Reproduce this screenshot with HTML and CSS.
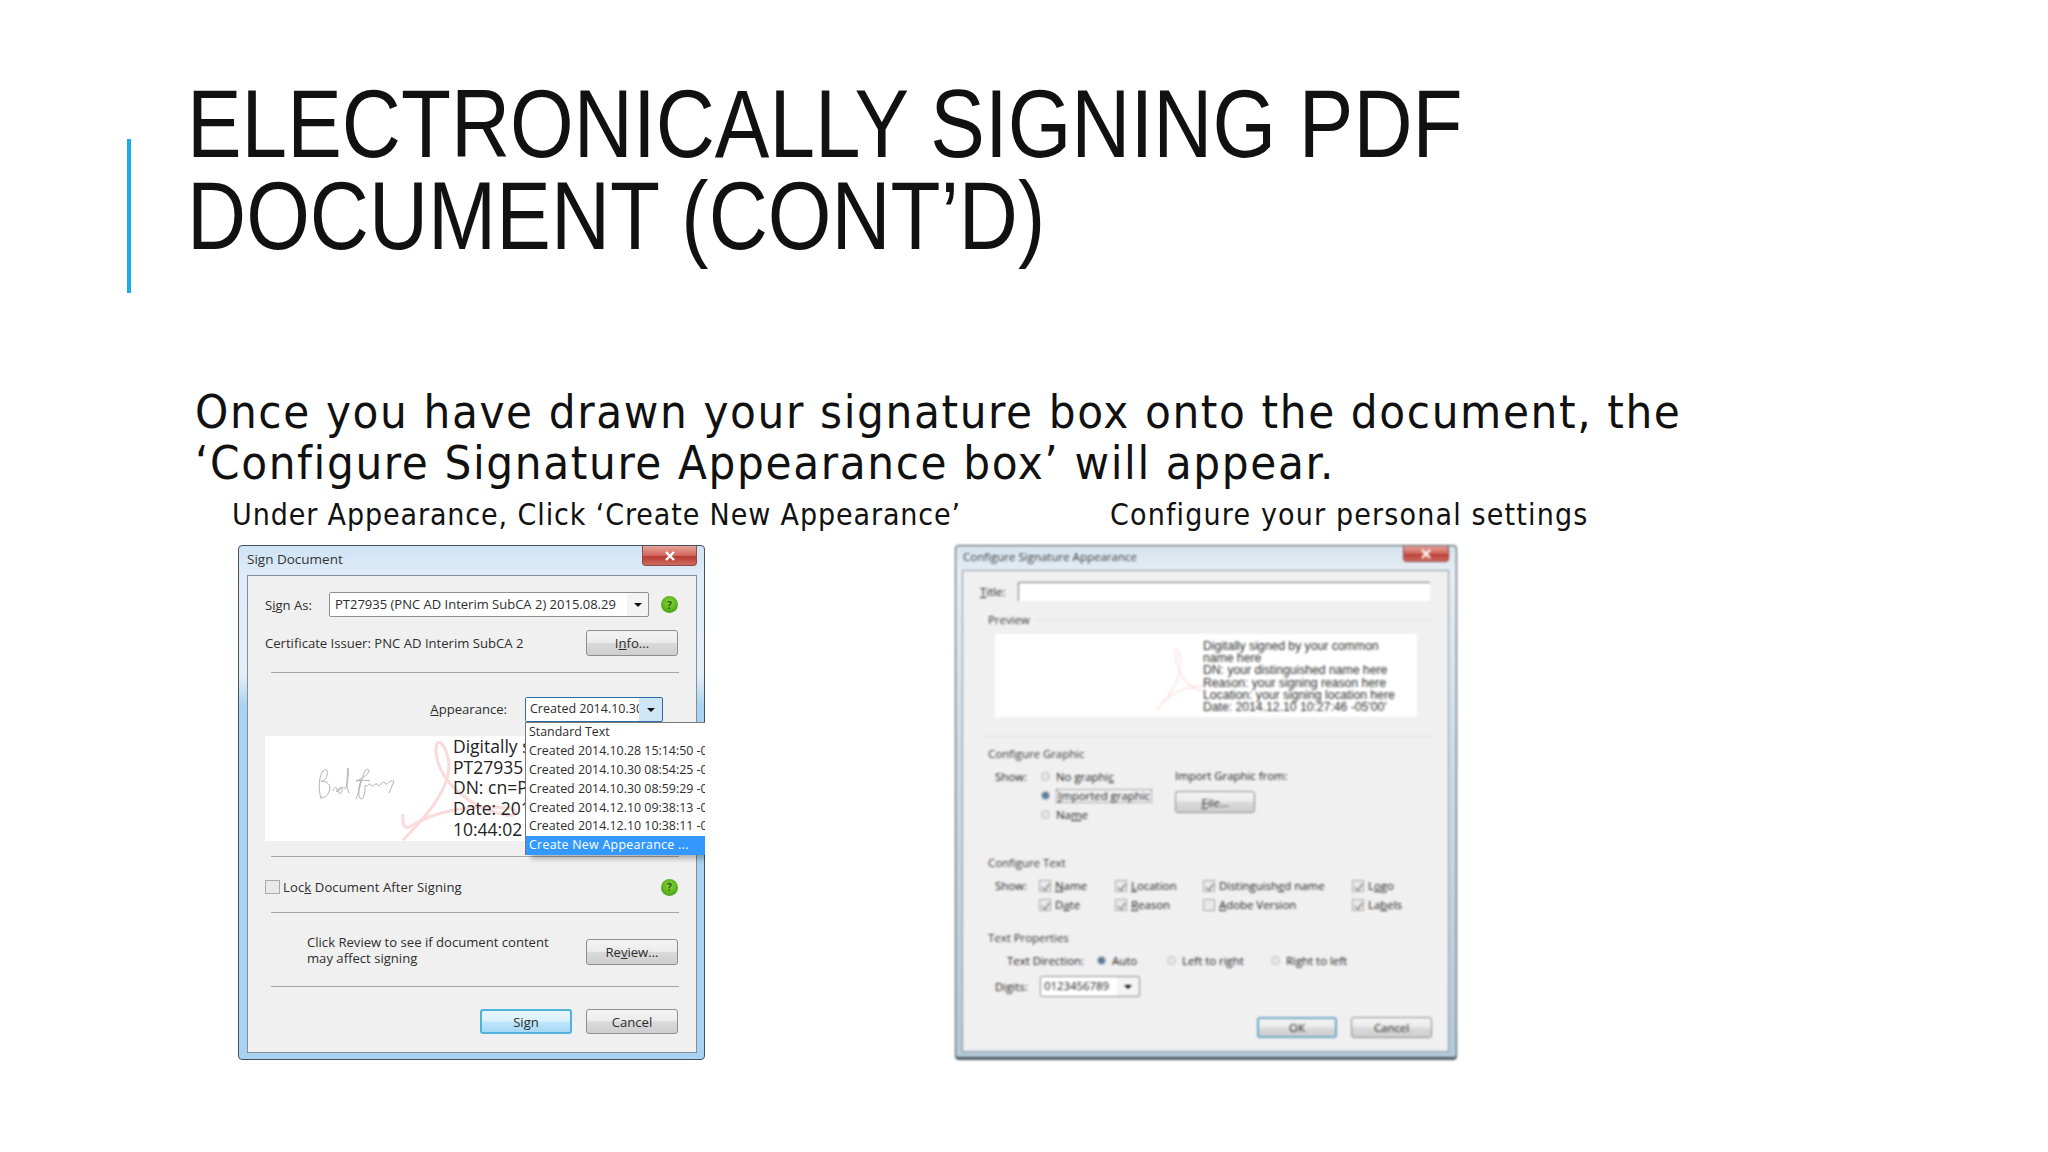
FILE: index.html
```html
<!DOCTYPE html>
<html lang="en">
<head>
<meta charset="utf-8">
<title>Electronically signing PDF document</title>
<link rel="stylesheet" href="styles.css">
</head>
<body>
<main class="slide">
  <header class="head">
    <div class="accent"></div>
    <h1 class="title">ELECTRONICALLY SIGNING PDF<br>DOCUMENT (CONT’D)</h1>
  </header>
  <p class="lead">Once you have drawn your signature box onto the document, the<br>‘Configure Signature Appearance box’ will appear.</p>
  <div class="captions">
    <p class="caption caption-a">Under Appearance, Click ‘Create New Appearance’</p>
    <p class="caption caption-b">Configure your personal settings</p>
  </div>
  <div class="shots">

    <section class="dlg dlg-sign">
      <div class="bar">
        <span class="bar-title">Sign Document</span>
        <span class="close"><svg viewBox="0 0 12 10" class="close-x"><path d="M2 1l8 8M10 1l-8 8"/></svg></span>
      </div>
      <div class="pane">
        <div class="row r-signas">
          <span class="lbl lbl-signas">S<u>i</u>gn As:</span>
          <span class="combo combo-signas"><span class="combo-text">PT27935 (PNC AD Interim SubCA 2) 2015.08.29</span><i class="arrow"></i></span>
          <span class="help">?</span>
        </div>
        <div class="row r-issuer">
          <span class="lbl">Certificate Issuer: PNC AD Interim SubCA 2</span>
          <button class="btn btn-wide">I<u>n</u>fo...</button>
        </div>
        <div class="sep sep-1"></div>
        <div class="row r-appear">
          <span class="lbl"><u>A</u>ppearance:</span>
          <span class="combo combo-focus">
            <span class="combo-text">Created 2014.10.30 08:59:29</span><i class="arrow"></i>
            <ul class="menu">
              <li>Standard Text</li>
              <li>Created 2014.10.28 15:14:50 -05'00'</li>
              <li>Created 2014.10.30 08:54:25 -05'00'</li>
              <li>Created 2014.10.30 08:59:29 -05'00'</li>
              <li>Created 2014.12.10 09:38:13 -05'00'</li>
              <li>Created 2014.12.10 10:38:11 -05'00'</li>
              <li class="menu-on">Create New Appearance ...</li>
            </ul>
          </span>
        </div>
        <div class="preview preview-sign">
          <svg class="logo logo-sign" viewBox="0 0 260 110"><path d="M138 104C162 80 192 46 182 18 177 2 168 2 172 22 176 46 205 72 240 79 254 81 254 72 240 72 205 68 168 76 146 90 140 94 137 90 138 78"/></svg>
          <svg class="scribble" viewBox="0 0 80 34"><path d="M3 33C0 22 1 10 5 5 9 1 11 6 8 12 6 15 4 16 3 15 9 15 14 19 11 26 9 31 5 33 2 30M15 25C17 20 19 20 19 26 21 21 24 20 24 25 22 30 19 27 22 22 26 20 27 25 28 21 30 14 31 7 30 2 29 12 28 22 31 27M38 33C42 24 43 12 47 5 50 1 52 4 50 7 46 12 41 14 38 15 44 14 48 14 52 15M43 14C40 22 40 32 43 33 46 34 47 26 47 20M47 19C50 23 50 15 53 19 55 23 57 15 60 19 62 23 64 13 67 17 69 21 71 13 76 15L71 27"/></svg>
          <div class="sig-text">Digitally signed by Brad<br>PT27935<br>DN: cn=PT27935<br>Date: 2014.10.30<br>10:44:02 -05'00'</div>
        </div>
        <div class="sep sep-2"></div>
        <div class="row r-lock">
          <label class="check-wrap"><i class="box box-lg"></i><span class="lbl lock-lbl">Loc<u>k</u> Document After Signing</span></label>
          <span class="help">?</span>
        </div>
        <div class="sep sep-3"></div>
        <div class="row r-review">
          <span class="lbl review-note">Click Review to see if document content<br>may affect signing</span>
          <button class="btn btn-wide">Re<u>v</u>iew...</button>
        </div>
        <div class="sep sep-4"></div>
        <div class="row r-actions">
          <button class="btn btn-wide btn-default">Sign</button>
          <button class="btn btn-wide">Cancel</button>
        </div>
      </div>
    </section>

    <section class="dlg dlg-config">
      <div class="bar bar-config">
        <span class="bar-title">Configure Signature Appearance</span>
        <span class="close close-config"><svg viewBox="0 0 12 10" class="close-x"><path d="M2 1l8 8M10 1l-8 8"/></svg></span>
      </div>
      <div class="pane pane-config">
        <div class="row c-title">
          <span class="c-title-lbl"><u>T</u>itle:</span>
          <span class="input"></span>
        </div>
        <div class="group-head c-preview-head"><span>Preview</span><i class="fade-rule"></i></div>
        <div class="preview preview-config">
          <svg class="logo logo-config" viewBox="0 0 60 80"><path d="M2 78C18 62 34 38 30 14 28 2 24 2 25 16 27 34 38 52 58 56"/><path d="M58 50C40 48 20 58 8 70"/></svg>
          <div class="sample">Digitally signed by your common<br>name here<br>DN: your distinguished name here<br>Reason: your signing reason here<br>Location: your signing location here<br>Date: 2014.12.10 10:27:46 -05'00'</div>
        </div>
        <div class="fade-rule c-rule"></div>
        <div class="group-head c-graphic-head"><span>Configure Graphic</span></div>
        <div class="graphic-grid">
          <span class="show">Show:</span>
          <div class="radios">
            <label class="opt"><i class="radio"></i><span>No graphi<u>c</u></span></label>
            <label class="opt"><i class="radio radio-on"></i><span class="focus"><u>I</u>mported graphic</span></label>
            <label class="opt"><i class="radio"></i><span>Na<u>m</u>e</span></label>
          </div>
          <div class="import">
            <span>Import Graphic from:</span>
            <button class="btn btn-file"><u>F</u>ile...</button>
          </div>
        </div>
        <div class="group-head c-text-head"><span>Configure Text</span></div>
        <div class="checks">
          <span class="show">Show:</span>
          <label class="opt"><i class="box box-on"></i><span><u>N</u>ame</span></label>
          <label class="opt"><i class="box box-on"></i><span><u>L</u>ocation</span></label>
          <label class="opt"><i class="box box-on"></i><span>Distinguish<u>e</u>d name</span></label>
          <label class="opt"><i class="box box-on"></i><span>L<u>o</u>go</span></label>
          <span></span>
          <label class="opt"><i class="box box-on"></i><span>D<u>a</u>te</span></label>
          <label class="opt"><i class="box box-on"></i><span><u>R</u>eason</span></label>
          <label class="opt"><i class="box"></i><span><u>A</u>dobe Version</span></label>
          <label class="opt"><i class="box box-on"></i><span>La<u>b</u>els</span></label>
        </div>
        <div class="group-head c-props-head"><span>Text Properties</span></div>
        <div class="direction">
          <span class="dir-lbl">Text Direction:</span>
          <label class="opt dir-auto"><i class="radio radio-on"></i><span>Auto</span></label>
          <label class="opt dir-ltr"><i class="radio"></i><span>Left to right</span></label>
          <label class="opt"><i class="radio"></i><span>Right to left</span></label>
        </div>
        <div class="digits">
          <span class="digits-lbl">Digits:</span>
          <span class="combo combo-digits"><span class="combo-text">0123456789</span><i class="arrow"></i></span>
        </div>
        <div class="row c-actions">
          <button class="btn btn-ok">OK</button>
          <button class="btn btn-ccl">Cancel</button>
        </div>
      </div>
    </section>

  </div>
</main>
</body>
</html>
```
FILE: styles.css
```css
* { box-sizing: border-box; }
html, body { margin: 0; padding: 0; background: #fff; }
.slide { width: 2048px; height: 1152px; overflow: hidden; background: #fff; color: #111; }

.head { display: flex; align-items: flex-start; padding: 78px 0 0 127px; }
.accent { width: 3.5px; height: 154px; margin-top: 61px; background: #1cade4; flex: none; }
.title { margin: 0 0 0 56.5px; font: 400 96px/92px "Liberation Sans", sans-serif; color: #111; white-space: nowrap; transform: scaleX(.853); transform-origin: left top; }

.lead { margin: 94px 0 0 195px; font: 400 47px/50.5px "DejaVu Sans Condensed", "DejaVu Sans", sans-serif; letter-spacing: 1.62px; color: #111; white-space: nowrap; }

.captions { display: flex; margin-top: 9px; padding-left: 232px; }
.caption { margin: 0; font: 400 30px/36px "DejaVu Sans Condensed", "DejaVu Sans", sans-serif; color: #111; white-space: nowrap; }
.caption-a { width: 878px; letter-spacing: .89px; }
.caption-b { letter-spacing: 1.16px; }

.shots { display: flex; gap: 250px; margin-top: 12px; padding-left: 238px; }

/* dialogs */
.dlg { display: flex; flex-direction: column; height: 515px; border: 1px solid #46535e; border-radius: 4px; font-family: "Open Sans", sans-serif; color: #2d2d2d; background: linear-gradient(180deg, #cfe3f5 0, #dfecf8 30px, #e4eef7 130px, #a9d2f0 160px, #a9d2f0 100%); }
.dlg-sign { width: 467px; padding: 0 7px 6px 8px; font-size: 13.1px; }
.dlg-config { width: 502px; padding: 0 7px 5px 6px; font-size: 11.4px; color: #1f1f1f; filter: blur(0.85px); background: linear-gradient(180deg, #d5e3ee 0, #e6edf3 25px, #cfdce6 200px, #b4c8d7 100%); border-bottom: 3px solid #4f5a63; }

.bar { display: flex; justify-content: space-between; align-items: flex-start; height: 29px; flex: none; }
.bar-config { height: 24px; }
.bar-title { padding-top: 4px; line-height: 18px; font-size: 13.5px; color: #333; white-space: nowrap; }
.bar-config .bar-title { padding: 2px 0 0 1px; font-size: 11.5px; color: #3a3a3a; }
.close { display: flex; align-items: center; justify-content: center; width: 55px; height: 20px; border: 1px solid #8c4a48; border-top: 0; border-radius: 0 0 4px 4px; background: linear-gradient(180deg, #e8a49c 0, #d2665c 50%, #b73c33 55%, #cf6a60 100%); }
.close-config { width: 46px; height: 16px; }
.close-x { width: 12px; height: 10px; }
.close-x path { fill: none; stroke: #fff; stroke-width: 2.4; }

.pane { display: flex; flex-direction: column; flex: 1; padding: 0 18px 0 17px; background: #f0f0f0; border: 1px solid #7e8f9e; }
.row { display: flex; align-items: center; }
.lbl { white-space: nowrap; }
.lock-lbl { letter-spacing: .1px; }
.sep { height: 1px; margin: 0 -1px 0 6px; background: #a6a6a6; flex: none; }

.r-signas { height: 25px; margin-top: 16px; }
.lbl-signas { width: 64px; }
.combo { position: relative; display: flex; align-items: center; height: 25px; background: #f4f4f4; border: 1px solid #8f8f8f; border-radius: 2px; }
.combo-text { flex: 1; min-width: 0; overflow: hidden; white-space: nowrap; background: #fff; align-self: stretch; display: flex; align-items: center; padding: 0 0 2px 5px; }
.combo-signas { width: 320px; }
.combo-signas .combo-text { flex: none; width: 297px; font-size: 13px; }
.arrow { flex: none; width: 0; height: 0; margin: 0 auto; border-style: solid; border-width: 4px 4px 0; border-color: #111 transparent transparent; }
.help { display: flex; align-items: center; justify-content: center; width: 17px; height: 17px; margin-left: auto; border-radius: 50%; background: radial-gradient(circle at 50% 40%, #8fd63c 0, #56b01a 60%, #2f7f10 100%); font-size: 10px; font-weight: 700; color: #1d5a0a; }

.r-issuer { height: 26px; margin-top: 13px; justify-content: space-between; }
.btn { display: block; margin: 0; padding: 0; font: inherit; color: #2d2d2d; border: 1px solid #8e8e8e; border-radius: 3px; background: linear-gradient(180deg, #f4f4f4 0, #ebebeb 48%, #d9d9d9 52%, #cfcfcf 100%); }
.btn-wide { width: 92px; height: 100%; }
.btn-default { border: 2px solid #4fb3dc; background: linear-gradient(180deg, #eaf6fd 0, #d9f0fc 48%, #bee6fd 52%, #a7d9f5 100%); }

.sep-1 { margin-top: 16px; }
.r-appear { height: 25px; margin-top: 24px; justify-content: flex-end; padding-right: 15px; gap: 18px; }
.r-appear > .lbl { padding-bottom: 1px; }
.combo-focus { width: 138px; border: 1px solid #2a6aa8; background: #cfe6f7; }
.combo-focus .combo-text { flex: none; width: 113px; font-size: 12.5px; padding-left: 4px; }
.menu { position: absolute; z-index: 2; left: -1px; top: 24px; width: 180px; height: 133px; margin: 0; padding: 0; list-style: none; background: #fff; border: 1px solid #777; border-right: 0; box-shadow: 6px 4px 5px rgba(0,0,0,.25); clip-path: inset(0 0 -8px -2px); font-size: 12.4px; }
.menu li { height: 18.9px; padding-left: 3px; line-height: 18.9px; white-space: nowrap; overflow: hidden; }
.menu .menu-on { background: #3399ff; color: #fff; letter-spacing: .28px; }

.preview { position: relative; display: flex; background: #fff; flex: none; }
.preview-sign { width: 300px; height: 105px; margin-top: 14px; }
.logo { position: absolute; overflow: visible; }
.logo path { fill: none; stroke: #fadadb; stroke-width: 3; }
.logo-sign { left: 0; top: 0; width: 260px; height: 110px; }
.scribble { flex: none; width: 80px; height: 36px; margin: 29px 55px 0 53px; }
.scribble path { fill: none; stroke: #b3b3b3; stroke-width: 1; }
.sig-text { position: relative; font-size: 17.5px; line-height: 20.7px; color: #222; white-space: nowrap; }

.sep-2 { margin-top: 15px; }
.r-lock { height: 14px; margin-top: 23px; }
.check-wrap { display: flex; align-items: center; gap: 3px; }
.box { display: block; flex: none; position: relative; width: 12px; height: 12px; background: #e9e9e9; border: 1px solid #aaa; }
.box-lg { width: 15px; height: 14px; }
.box-on::after { content: ""; position: absolute; left: 3px; top: 1px; width: 4px; height: 7px; border: solid #666; border-width: 0 1.4px 1.4px 0; transform: rotate(35deg); }
.sep-3 { margin-top: 18px; }
.r-review { height: 26px; margin-top: 26px; justify-content: space-between; }
.review-note { padding: 0 0 5px 42px; line-height: 16px; }
.sep-4 { margin-top: 21px; }
.r-actions { height: 25px; margin-top: 22px; justify-content: flex-end; gap: 14px; }

/* configure dialog */
.pane-config { padding: 0 16px 0 17px; border-color: #8a9aa6; }
.c-title { height: 19px; margin-top: 11px; }
.c-title-lbl { width: 38px; flex: none; }
.input { display: block; width: 412px; height: 19px; background: #fff; border: solid #777; border-width: 1px 0 0 1px; }
.group-head { display: flex; align-items: center; gap: 6px; height: 14px; padding-left: 8px; color: #3a3a3a; flex: none; white-space: nowrap; }
.fade-rule { display: block; height: 1px; flex: 1; background: #e2e2e2; }
.c-preview-head { margin-top: 11px; }
.preview-config { width: 422px; height: 83px; margin: 8px 0 0 15px; }
.logo-config { left: 160px; top: 8px; width: 50px; height: 72px; }
.logo-config path { stroke-width: 1.4; }
.sample { position: relative; margin: 6px 0 0 208px; font: 12.2px/12.2px "Liberation Sans", sans-serif; color: #333; white-space: nowrap; }
.c-rule { flex: none; margin-top: 19px; }
.c-graphic-head { margin-top: 9px; }
.graphic-grid { display: grid; grid-template-columns: 46px 134px 1fr; height: 57px; margin: 7px 0 0 15px; flex: none; }
.show { line-height: 19px; }
.opt { display: flex; align-items: center; gap: 4px; height: 19px; white-space: nowrap; }
.radio { display: block; flex: none; width: 9px; height: 9px; margin-right: 2px; border-radius: 50%; background: #e6e6e6; border: 1px solid #bbb; }
.radio-on { background: #5c7b98; border-color: #b9c6d0; }
.focus { padding: 0 1px; border: 1px dotted #666; line-height: 12px; }
.import { display: flex; flex-direction: column; line-height: 17px; }
.btn-file { width: 80px; height: 22px; margin-top: 7px; }
.c-text-head { margin-top: 31px; }
.checks { display: grid; grid-template-columns: 44px 76px 88px 149px auto; height: 38px; margin: 7px 0 0 15px; flex: none; }
.c-props-head { margin-top: 16px; }
.direction { display: flex; align-items: center; height: 20px; margin: 6px 0 0 27px; flex: none; }
.dir-lbl { width: 90px; flex: none; white-space: nowrap; }
.dir-auto { width: 70px; }
.dir-ltr { width: 104px; }
.digits { display: flex; align-items: center; height: 21px; margin: 6px 0 0 15px; flex: none; }
.digits-lbl { width: 45px; flex: none; }
.combo-digits { width: 100px; height: 21px; }
.combo-digits .combo-text { flex: none; width: 76px; padding-left: 3px; }
.c-actions { height: 21px; margin-top: 20px; justify-content: flex-end; gap: 14px; flex: none; }
.btn-ok { width: 80px; height: 21px; border: 2px solid #6da9c2; }
.btn-ccl { width: 81px; height: 21px; }
```
